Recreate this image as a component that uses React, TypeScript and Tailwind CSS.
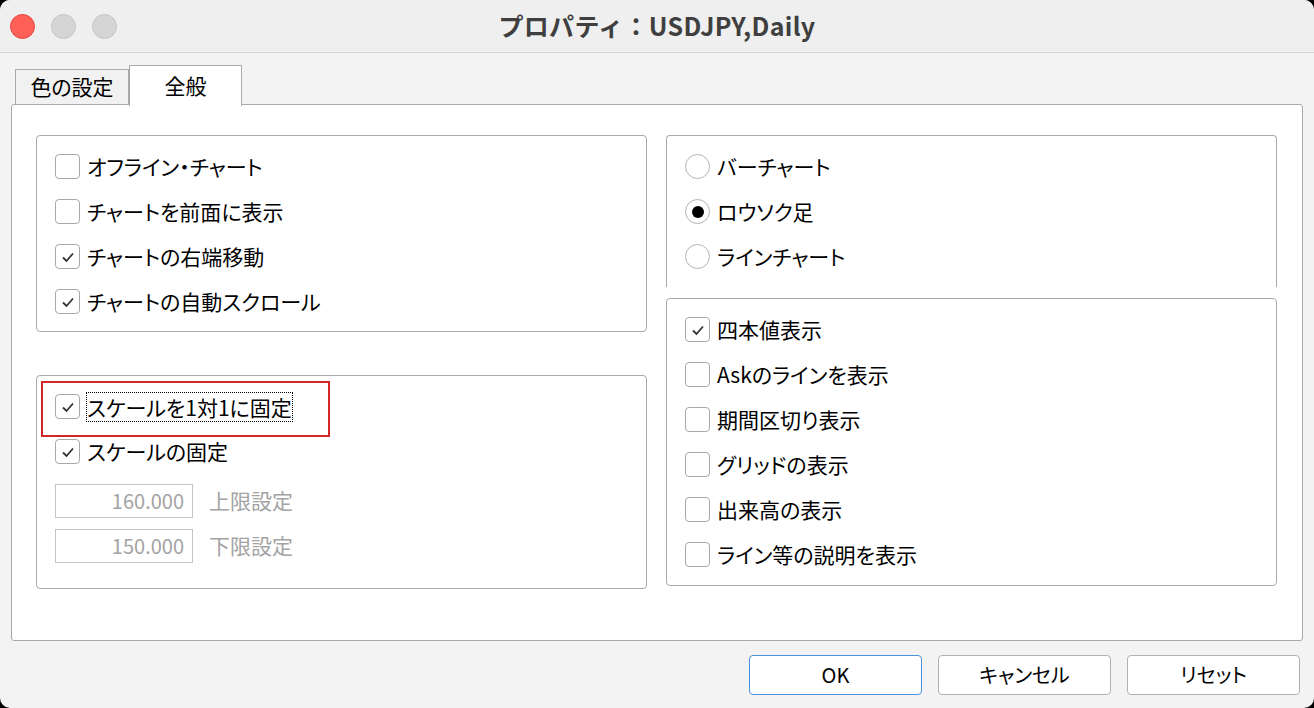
const jp = { fontFamily: '"Noto Sans CJK JP", "Noto Sans", sans-serif', fontFeatureSettings: '"palt"' };

function CheckBox({ checked }: { checked?: boolean }) {
  return (
    <span className="flex h-[25px] w-[25px] shrink-0 items-center justify-center rounded-[4px] border-[1.5px] border-[#a8a8a8] bg-white">
      {checked && (
        <svg width="16" height="16" viewBox="0 0 16 16">
          <path d="M3 8.5 L6.5 12 L13 4.5" fill="none" stroke="#333" strokeWidth="1.8" />
        </svg>
      )}
    </span>
  );
}

function Radio({ checked }: { checked?: boolean }) {
  return (
    <span className="flex h-[25px] w-[25px] shrink-0 items-center justify-center rounded-full border-[1.5px] border-[#b4b4b4] bg-white">
      {checked && <span className="h-[12px] w-[12px] rounded-full bg-black" />}
    </span>
  );
}

function Row({ children, label, focus }: { children: React.ReactNode; label: string; focus?: boolean }) {
  return (
    <div className="flex h-[45px] items-center gap-[7px]">
      {children}
      <span
        className={
          focus
            ? "text-[21px] leading-[28px] text-black outline-1 outline-dotted outline-black"
            : "text-[21px] leading-none text-black"
        }
      >
        {label}
      </span>
    </div>
  );
}

function Group({ children, className }: { children: React.ReactNode; className: string }) {
  return <div className={"border-[1.5px] border-[#a9a9a9] px-[18px] pt-[8px] " + className}>{children}</div>;
}

function NumField({ value, label }: { value: string; label: string }) {
  return (
    <div className="flex items-center gap-[16px]">
      <div className="flex h-[34px] w-[138px] items-center justify-end border-[1.5px] border-[#c4c4c4] pr-[8px] text-[20px] text-[#a3a3a3]">
        {value}
      </div>
      <span className="text-[21px] text-[#a3a3a3]">{label}</span>
    </div>
  );
}

function Btn({ label, primary }: { label: string; primary?: boolean }) {
  return (
    <button
      className={
        primary
          ? "h-[40px] w-[173px] rounded-[4px] border-[1.5px] border-[#4a92dc] bg-white text-[20px] text-black"
          : "h-[40px] w-[173px] rounded-[4px] border-[1.5px] border-[#b0b0b0] bg-white text-[20px] text-black"
      }
    >
      {label}
    </button>
  );
}

export default function App() {
  return (
    <div className="h-[708px] w-[1314px] bg-black" style={jp}>
      <div className="flex h-full flex-col overflow-hidden rounded-[10px] bg-[#f3f3f3]">
        <div className="grid h-[53px] grid-cols-[1fr_auto_1fr] items-center border-b border-[#d6d6d6] bg-[#efefef]">
          <div className="flex gap-[16px] pl-[10px]">
            <span className="h-[25px] w-[25px] rounded-full border border-[#e2463f] bg-[#fe5f57]" />
            <span className="h-[25px] w-[25px] rounded-full border border-[#c4c4c4] bg-[#d5d5d5]" />
            <span className="h-[25px] w-[25px] rounded-full border border-[#c4c4c4] bg-[#d5d5d5]" />
          </div>
          <div className="text-[25px] font-bold tracking-[0.3px] text-[#3f3f3f] [font-feature-settings:normal]">
            プロパティ：USDJPY,Daily
          </div>
          <div />
        </div>

        <div className="flex items-end pl-[15px] pt-[12px]">
          <div className="flex h-[35px] w-[114px] items-center justify-center border-[1.5px] border-b-0 border-[#a9a9a9] bg-[#f1f1f1] text-[21px] text-black">
            色の設定
          </div>
          <div className="relative z-10 -mb-[2px] flex h-[41px] w-[113px] items-center justify-center border-[1.5px] border-b-0 border-[#a9a9a9] bg-white text-[21px] text-black">
            全般
          </div>
        </div>

        <div className="mx-[11px] flex h-[537px] gap-[19px] rounded-[3px] border-[1.5px] border-[#a9a9a9] bg-white pl-[24px] pr-[12px] pt-[30px]">
          <div className="flex w-[611px] flex-col gap-[43px]">
            <Group className="h-[197px] rounded-[4px]">
              <Row label="オフライン・チャート"><CheckBox /></Row>
              <Row label="チャートを前面に表示"><CheckBox /></Row>
              <Row label="チャートの右端移動"><CheckBox checked /></Row>
              <Row label="チャートの自動スクロール"><CheckBox checked /></Row>
            </Group>
            <Group className="h-[214px] rounded-[4px]">
              <div className="relative">
                <span className="absolute -left-[14px] -top-[3px] h-[56px] w-[289px] border-2 border-[#d3262b]" />
                <Row label="スケールを1対1に固定" focus><CheckBox checked /></Row>
              </div>
              <Row label="スケールの固定"><CheckBox checked /></Row>
              <div className="mt-[10px] flex flex-col gap-[11px]">
                <NumField value="160.000" label="上限設定" />
                <NumField value="150.000" label="下限設定" />
              </div>
            </Group>
          </div>
          <div className="flex w-[611px] flex-col gap-[11px]">
            <Group className="h-[152px] rounded-t-[4px] border-b-0">
              <Row label="バーチャート"><Radio /></Row>
              <Row label="ロウソク足"><Radio checked /></Row>
              <Row label="ラインチャート"><Radio /></Row>
            </Group>
            <Group className="h-[288px] rounded-[4px]">
              <Row label="四本値表示"><CheckBox checked /></Row>
              <Row label="Askのラインを表示"><CheckBox /></Row>
              <Row label="期間区切り表示"><CheckBox /></Row>
              <Row label="グリッドの表示"><CheckBox /></Row>
              <Row label="出来高の表示"><CheckBox /></Row>
              <Row label="ライン等の説明を表示"><CheckBox /></Row>
            </Group>
          </div>
        </div>

        <div className="flex justify-end gap-[16px] pr-[14px] pt-[14px]">
          <Btn label="OK" primary />
          <Btn label="キャンセル" />
          <Btn label="リセット" />
        </div>
      </div>
    </div>
  );
}
